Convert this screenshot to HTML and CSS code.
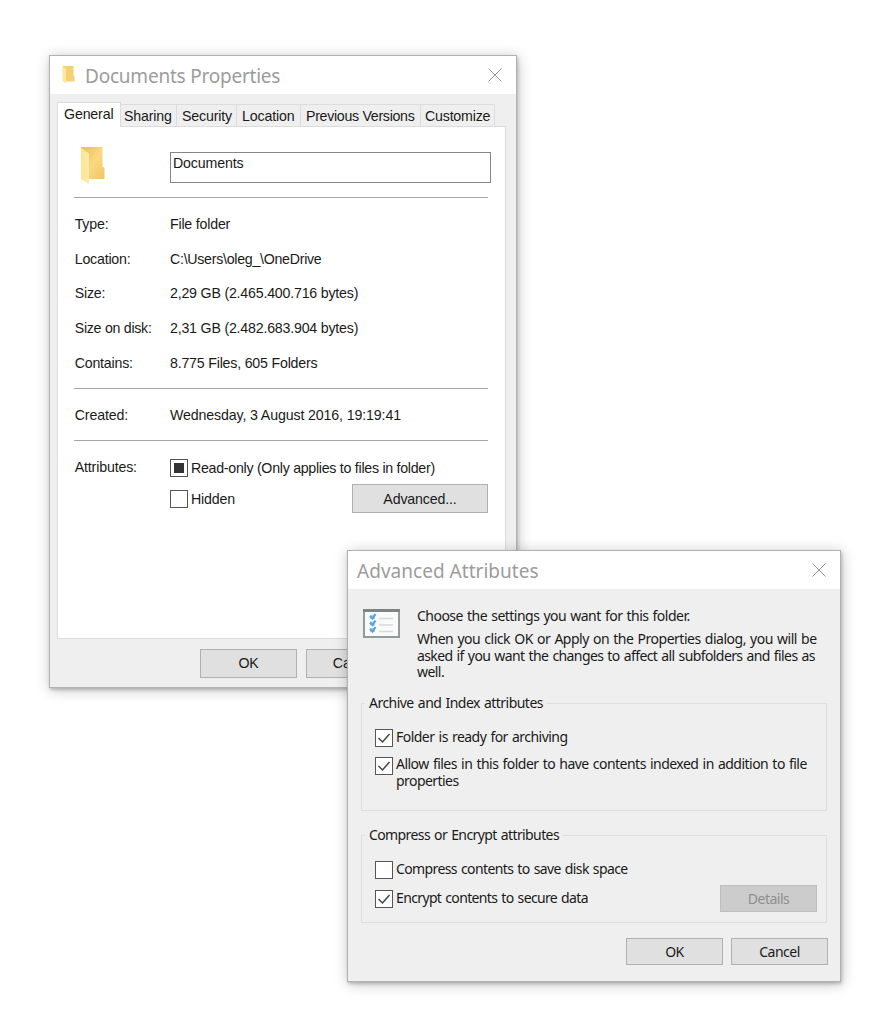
FILE: index.html
```html
<!DOCTYPE html>
<html lang="en">
<head>
<meta charset="utf-8">
<title>Documents Properties</title>
<link rel="stylesheet" href="styles.css">
</head>
<body>
<main class="desktop">
  <section class="window properties">
    <header class="titlebar">
      <svg class="folder-small" width="13" height="18" viewBox="0 0 26 36"><path fill="#f5cf70" d="M1 0h22v20l2 1v10H7z"/><path fill="#ffe6a0" d="M1 0l7 5v30l-7-5z"/></svg>
      <h1 class="title">Documents Properties</h1>
      <svg class="close" width="14" height="14" viewBox="0 0 14 14"><path d="M.5.5l13 13M13.500.5l-13 13"/></svg>
    </header>
    <nav class="tabs">
      <span class="tab active">General</span><span class="tab sharing">Sharing</span><span class="tab security">Security</span><span class="tab location">Location</span><span class="tab versions">Previous Versions</span><span class="tab customize">Customize</span>
    </nav>
    <div class="panel">
      <div class="name-row">
        <svg width="24" height="37" viewBox="0 0 24 37"><defs><linearGradient id="back" x1="0" x2="1" y1="0" y2="1"><stop offset="0" stop-color="#e6bd55"/><stop offset=".5" stop-color="#fbd981"/><stop offset="1" stop-color="#f0c65f"/></linearGradient><linearGradient id="front" x1="0" x2="1"><stop offset="0" stop-color="#ffe391"/><stop offset="1" stop-color="#ffebae"/></linearGradient></defs><path fill="url(#back)" d="M0 0h21.500v19.500l2 1.500v11H7L0 5z"/><path fill="url(#front)" d="M0 .5l8 6V37l-8-4.800z"/></svg>
        <div class="name-field">Documents</div>
      </div>
      <dl class="details">
        <dt>Type:</dt><dd>File folder</dd>
        <dt>Location:</dt><dd class="path">C:\Users\oleg_\OneDrive</dd>
        <dt>Size:</dt><dd>2,29 GB (2.465.400.716 bytes)</dd>
        <dt class="disk">Size on disk:</dt><dd>2,31 GB (2.482.683.904 bytes)</dd>
        <dt>Contains:</dt><dd>8.775 Files, 605 Folders</dd>
      </dl>
      <dl class="created"><dt>Created:</dt><dd>Wednesday, 3 August 2016, 19:19:41</dd></dl>
      <div class="attributes">
        <span class="attr-label">Attributes:</span>
        <div class="attr-options">
          <label class="option"><i class="box mixed"></i><span class="readonly">Read-only (Only applies to files in folder)</span></label>
          <div class="hidden-row"><label class="option"><i class="box"></i><span>Hidden</span></label><span class="button advanced-button">Advanced...</span></div>
        </div>
      </div>
    </div>
    <footer class="footer"><span class="button">OK</span><span class="button">Cancel</span></footer>
  </section>

  <section class="window advanced">
    <header class="titlebar">
      <h2 class="title">Advanced Attributes</h2>
      <svg class="close" width="14" height="14" viewBox="0 0 14 14"><path d="M.5.5l13 13M13.500.5l-13 13"/></svg>
    </header>
    <div class="intro">
      <svg width="37" height="29" viewBox="0 0 37 29"><path fill="#fafafa" stroke="#949b9c" stroke-width="2" d="M1 1h35v27H1z"/><path stroke="#7e8586" stroke-width="3" d="M0 1.500h37"/><path stroke="#d7d9da" stroke-width="1.500" d="M16 9.500h14M16 16h14M16 22.500h14"/><path fill="none" stroke="#a9d0ee" stroke-width="4" d="M7 8h5M7 14.500h5M7 21h5"/><path fill="none" stroke="#55a5e2" stroke-width="2.200" d="M7 7l2.500 2.500L12.500 5M7 13.500l2.500 2.500 3-4.500M7 20l2.500 2.500 3-4.500"/></svg>
      <div><p class="lead">Choose the settings you want for this folder.</p>
      <p class="explain"><span class="line e1">When you click OK or Apply on the Properties dialog, you will be</span><span class="line e2">asked if you want the changes to affect all subfolders and files as</span><span class="line">well.</span></p></div>
    </div>
    <fieldset class="group archive">
      <legend>Archive and Index attributes</legend>
      <label class="option"><i class="box"><svg width="16" height="16" viewBox="0 0 16 16"><path d="M2.500 8l4 4 7-8"/></svg></i><span class="a1">Folder is ready for archiving</span></label>
      <label class="option multi"><i class="box"><svg width="16" height="16" viewBox="0 0 16 16"><path d="M2.500 8l4 4 7-8"/></svg></i><span><span class="line a2">Allow files in this folder to have contents indexed in addition to file</span><span class="line">properties</span></span></label>
    </fieldset>
    <fieldset class="group encrypt">
      <legend>Compress or Encrypt attributes</legend>
      <label class="option"><i class="box"></i><span class="c1">Compress contents to save disk space</span></label>
      <div class="encrypt-row"><label class="option"><i class="box"><svg width="16" height="16" viewBox="0 0 16 16"><path d="M2.500 8l4 4 7-8"/></svg></i><span class="c2">Encrypt contents to secure data</span></label><span class="button disabled">Details</span></div>
    </fieldset>
    <footer class="footer"><span class="button">OK</span><span class="button">Cancel</span></footer>
  </section>
</main>
</body>
</html>
```
FILE: styles.css
```css
* { box-sizing: border-box; }
body { margin: 0; background: #fff; color: #1a1a1a; }
.desktop { position: relative; width: 885px; height: 1024px; overflow: hidden; }
h1, h2, p, dl, dd, fieldset { margin: 0; padding: 0; }
.window { position: absolute; background: #efefef; border: 1px solid #b2b2b2; box-shadow: 1px 2px 13px rgba(0,0,0,.24), 1px 2px 3px rgba(0,0,0,.2); white-space: nowrap; }
.properties { left: 49px; top: 55px; width: 468px; height: 633px; font: 14.2px/20px "Liberation Sans", Arial, sans-serif; letter-spacing: -.15px; }
.advanced { left: 347px; top: 550px; width: 494px; height: 432px; font: 14px/17px "Noto Sans", sans-serif; letter-spacing: -.56px; word-spacing: 1px; }
.titlebar { display: flex; align-items: flex-start; height: 38px; padding: 12px 14px 0 12px; background: #fff; }
.title { font: 400 19px/26px "Noto Sans", sans-serif; color: #9c9c9c; margin-top: -5px; letter-spacing: .03px; word-spacing: 0; }
.properties .title { margin-left: 10px; letter-spacing: -.22px; }
.folder-small { margin-top: -2px; }
.advanced .titlebar { padding-left: 9px; }
.close { margin-left: auto; fill: none; stroke: #999; stroke-width: 1; }
.tabs { display: flex; align-items: flex-end; height: 32px; padding-left: 7px; }
.tab { height: 22px; padding-left: 4px; border: solid #dcdcdc; border-width: 1px 1px 0 0; line-height: 22px; }
.tab.active { position: relative; width: 64px; height: 25px; margin-bottom: -1px; padding-left: 6px; background: #fff; border-left-width: 1px; }
.sharing { width: 56px; padding-left: 3px; }
.security { width: 60px; padding-left: 5px; }
.location { width: 64px; padding-left: 5px; }
.versions { width: 120px; padding-left: 5px; letter-spacing: -.3px; }
.customize { width: 74px; padding-left: 4px; letter-spacing: -.2px; }
.panel { height: 513px; margin: 0 10px 0 7px; padding: 20px 17px 0 16px; background: #fff; border: 1px solid #dcdcdc; }
.name-row { display: flex; justify-content: space-between; height: 51px; border-bottom: 1px solid #a6a6a6; padding-left: 7px; }
.name-row svg { flex: none; }
.name-field { width: 321px; height: 31px; margin: 5px -3px 0 0; padding-left: 2px; border: 1px solid #858585; }
.details { display: grid; grid-template-columns: 96px 1fr; grid-auto-rows: 34.700px; align-items: center; height: 191px; padding-top: 8.600px; border-bottom: 1px solid #a6a6a6; letter-spacing: -.2px; }
.path { letter-spacing: -.27px; }
.disk { letter-spacing: -.27px; }
dt, .attr-label { padding-left: .7px; }
.created { display: grid; grid-template-columns: 96px 1fr; align-items: center; height: 52px; border-bottom: 1px solid #a6a6a6; letter-spacing: -.13px; }
.attributes { display: grid; grid-template-columns: 96px 1fr; padding-top: 16px; }
.option { display: flex; align-items: center; }
.box { flex: none; width: 18px; height: 18px; background: #fff; border: 1px solid #555; margin-right: 3px; }
.box svg { display: block; fill: none; stroke: #444; stroke-width: 1.5; }
.mixed { padding: 3px; }
.mixed::before { content: ""; display: block; width: 10px; height: 10px; background: #333; }
.readonly { letter-spacing: -.27px; }
.attr-options { padding-top: 1px; }
.hidden-row, .encrypt-row { display: flex; justify-content: space-between; align-items: center; }
.hidden-row { height: 29px; margin-top: 6px; }
.button { display: flex; align-items: center; justify-content: center; width: 97px; height: 27px; background: #e0e0e0; border: 1px solid #b0b0b0; }
.advanced-button { width: 136px; height: 29px; }
.footer { display: flex; gap: 9px; padding: 10px 0 0 150px; }
.properties .footer .button { height: 29px; padding-bottom: 2px; }
.line { display: block; width: max-content; }
.intro { display: flex; gap: 17px; height: 106px; padding: 18px 0 0 15px; }
.intro > svg { flex: none; margin-top: 2px; }
.lead { letter-spacing: -.52px; }
.explain { line-height: 16.500px; margin-top: 7px; }
.e1 { letter-spacing: -.49px; }
.e2 { letter-spacing: -.6px; }
.a1 { letter-spacing: -.53px; }
.c1 { letter-spacing: -.61px; }
.a2 { letter-spacing: -.52px; }
.c2 { letter-spacing: -.64px; }
.a1, .c1, .c2 { padding-bottom: 3px; }
.group { min-width: 0; margin: 0 13px; border: 1px solid #dfdfdf; }
.group legend { margin-left: -10px; padding: 0 4px 2px; line-height: 15px; }
.archive { height: 116px; padding: 17px 0 0 13px; }
.archive legend { letter-spacing: -.53px; }
.archive .multi { margin-top: 10px; align-items: flex-start; line-height: 16.500px; }
.archive .option, .encrypt .option { height: 18px; }
.archive .multi > span { margin-top: -1px; }
.encrypt { height: 96px; margin-top: 16px; padding: 17px 9px 0 13px; }
.encrypt legend { letter-spacing: -.6px; }
.encrypt-row { height: 27px; margin-top: 6px; }
.encrypt .disabled { background: #ccc; border-color: #bfbfbf; color: #8f8f8f; }
.advanced .button { padding-bottom: 1px; letter-spacing: -.5px; }
.advanced .footer { justify-content: flex-end; gap: 8px; padding: 15px 12px 0; }
```
